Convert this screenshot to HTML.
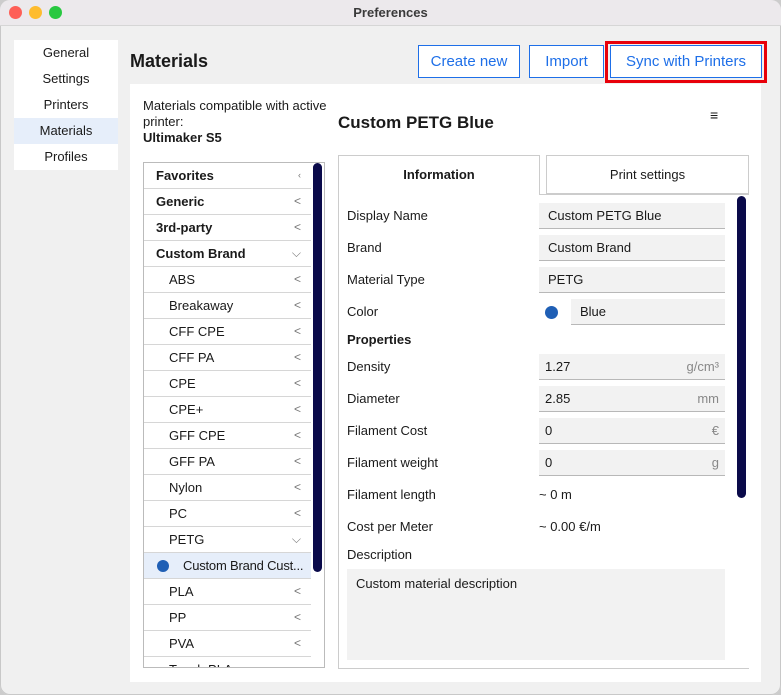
<!DOCTYPE html>
<html><head><meta charset="utf-8"><style>
*{box-sizing:border-box;margin:0;padding:0}
body{width:781px;height:695px;background:#ccc;font-family:"Liberation Sans",sans-serif;font-size:13px;color:#1a1a1a;position:relative;overflow:hidden}
.win{position:absolute;left:0;top:0;width:781px;height:695px;background:#f0f0f0;border-radius:10px;overflow:hidden;box-shadow:inset 0 0 0 1px #c8c8c8}
.tb{position:absolute;left:0;top:0;width:100%;height:26px;background:#ece9ec;border-bottom:1px solid #d6d6d6;text-align:center;line-height:25px;font-weight:bold;font-size:13px;color:#3a3a3a}
.dot{position:absolute;top:6px;width:13px;height:13px;border-radius:50%}
.a{position:absolute}
.side{left:14px;top:40px;width:104px;height:130px;background:#fff}
.side div{height:26px;line-height:26px;text-align:center}
.btn{position:absolute;top:45px;height:33px;border:1px solid #1e6fe8;background:#fff;color:#1e6fe8;font-size:15px;text-align:center;line-height:31px}
.list{left:143px;top:162px;width:182px;height:506px;border:1px solid #bbb;overflow:hidden;background:#fff}
.row{height:26px;line-height:25px;border-bottom:1px solid #d6d6d6;position:relative;width:167px;white-space:nowrap;overflow:hidden}
.row .c{position:absolute;right:10px;top:0;color:#777;font-size:12px;font-weight:normal}
.lbl{position:absolute;left:347px}
.fld{position:absolute;left:539px;width:186px;height:26px;background:#f2f2f2;border-bottom:1px solid #b8b8b8;line-height:25px;padding-left:9px}
.u{position:absolute;right:6px;color:#888}
</style></head><body><div class="win">
<div class="tb">Preferences
<div class="dot" style="left:9px;background:#fe5f57"></div><div class="dot" style="left:29px;background:#febc2e"></div><div class="dot" style="left:49px;background:#28c840"></div></div>
<div class="a side"><div>General</div><div>Settings</div><div>Printers</div><div style="background:#e6eefa">Materials</div><div>Profiles</div></div>
<div class="a" style="left:130px;top:51px;font-size:18px;font-weight:bold">Materials</div>
<div class="btn" style="left:418px;width:102px">Create new</div>
<div class="btn" style="left:529px;width:75px">Import</div>
<div class="a" style="left:605px;top:41px;width:162px;height:42px;border:3px solid #e8000a"></div>
<div class="btn" style="left:610px;width:152px">Sync with Printers</div>
<div class="a" style="left:130px;top:84px;width:631px;height:598px;background:#fff"></div>
<div class="a" style="left:143px;top:98px;line-height:16px">Materials compatible with active<br>printer:<br><b>Ultimaker S5</b></div>
<div class="a" style="left:338px;top:113px;font-size:17px;font-weight:bold">Custom PETG Blue</div>
<div class="a" style="left:710px;top:107px;font-size:14px">≡</div>
<div class="a list">
<div class="row" style="padding-left:12px;font-weight:bold">Favorites<span class="c" style="font-size:9px">‹</span></div>
<div class="row" style="padding-left:12px;font-weight:bold">Generic<span class="c">&lt;</span></div>
<div class="row" style="padding-left:12px;font-weight:bold">3rd-party<span class="c">&lt;</span></div>
<div class="row" style="padding-left:12px;font-weight:bold">Custom Brand<span class="c">⌵</span></div>
<div class="row" style="padding-left:25px">ABS<span class="c">&lt;</span></div>
<div class="row" style="padding-left:25px">Breakaway<span class="c">&lt;</span></div>
<div class="row" style="padding-left:25px">CFF CPE<span class="c">&lt;</span></div>
<div class="row" style="padding-left:25px">CFF PA<span class="c">&lt;</span></div>
<div class="row" style="padding-left:25px">CPE<span class="c">&lt;</span></div>
<div class="row" style="padding-left:25px">CPE+<span class="c">&lt;</span></div>
<div class="row" style="padding-left:25px">GFF CPE<span class="c">&lt;</span></div>
<div class="row" style="padding-left:25px">GFF PA<span class="c">&lt;</span></div>
<div class="row" style="padding-left:25px">Nylon<span class="c">&lt;</span></div>
<div class="row" style="padding-left:25px">PC<span class="c">&lt;</span></div>
<div class="row" style="padding-left:25px">PETG<span class="c">⌵</span></div>
<div class="row" style="padding-left:39px;background:#e6eefa;letter-spacing:-0.2px"><span style="position:absolute;left:13px;top:7px;width:12px;height:12px;border-radius:50%;background:#1f5fb5"></span>Custom Brand Cust...</div>
<div class="row" style="padding-left:25px">PLA<span class="c">&lt;</span></div>
<div class="row" style="padding-left:25px">PP<span class="c">&lt;</span></div>
<div class="row" style="padding-left:25px">PVA<span class="c">&lt;</span></div>
<div class="row" style="padding-left:25px">Tough PLA<span class="c">⌵</span></div>
</div>
<div class="a" style="left:313px;top:163px;width:9px;height:409px;background:#0a0a4a;border-radius:5px"></div>
<div class="a" style="left:338px;top:155px;width:202px;height:40px;border:1px solid #ccc;border-bottom:none;background:#fff;text-align:center;line-height:38px;font-weight:bold;z-index:2">Information</div>
<div class="a" style="left:546px;top:155px;width:203px;height:39px;border:1px solid #ccc;background:#fff;text-align:center;line-height:38px">Print settings</div>
<div class="a" style="left:338px;top:194px;width:411px;height:475px;border:1px solid #ccc;border-right:none"></div>
<div class="a" style="left:737px;top:196px;width:9px;height:302px;background:#0a0a4a;border-radius:5px"></div>
<div class="lbl" style="top:208px">Display Name</div><div class="fld" style="top:203px">Custom PETG Blue</div>
<div class="lbl" style="top:240px">Brand</div><div class="fld" style="top:235px">Custom Brand</div>
<div class="lbl" style="top:272px">Material Type</div><div class="fld" style="top:267px">PETG</div>
<div class="lbl" style="top:304px">Color</div>
<div class="a" style="left:545px;top:306px;width:13px;height:13px;border-radius:50%;background:#1f5fb5"></div>
<div class="fld" style="top:299px;left:571px;width:154px">Blue</div>
<div class="lbl" style="top:332px;font-weight:bold">Properties</div>
<div class="lbl" style="top:359px">Density</div><div class="fld" style="top:354px;padding-left:6px">1.27<span class="u">g/cm³</span></div>
<div class="lbl" style="top:391px">Diameter</div><div class="fld" style="top:386px;padding-left:6px">2.85<span class="u">mm</span></div>
<div class="lbl" style="top:423px">Filament Cost</div><div class="fld" style="top:418px;padding-left:6px">0<span class="u">€</span></div>
<div class="lbl" style="top:455px">Filament weight</div><div class="fld" style="top:450px;padding-left:6px">0<span class="u">g</span></div>
<div class="lbl" style="top:487px">Filament length</div><div class="a" style="left:539px;top:487px">~ 0 m</div>
<div class="lbl" style="top:519px">Cost per Meter</div><div class="a" style="left:539px;top:519px">~ 0.00 €/m</div>
<div class="lbl" style="top:547px">Description</div>
<div class="a" style="left:347px;top:569px;width:378px;height:91px;background:#f2f2f2;padding:7px 9px">Custom material description</div>
</div></body></html>
